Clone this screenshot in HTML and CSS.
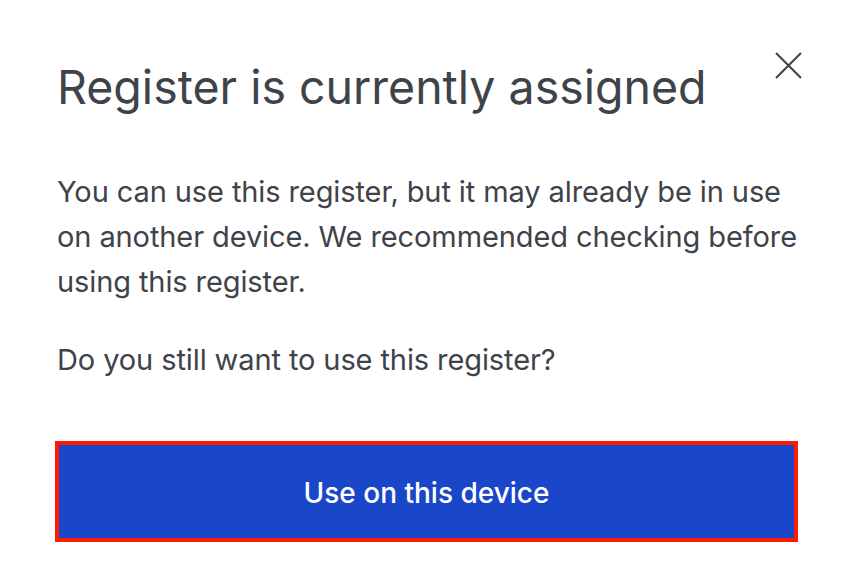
FILE: index.html
```html
<!DOCTYPE html>
<html lang="en">
<head>
<meta charset="utf-8">
<title>Register is currently assigned</title>
<link rel="stylesheet" href="styles.css">
</head>
<body>
<div class="dialog">
  <div class="header">
    <h1 class="title">Register is currently assigned</h1>
    <button class="close" aria-label="Close">
      <svg width="27" height="27" viewBox="0 0 27 27"><path d="M1 1L26 26M26 1L1 26" stroke="#3d4148" stroke-width="2" fill="none"/></svg>
    </button>
  </div>
  <p class="text first">You can use this register, but it may already be in use on another device. We recommended checking before using this register.</p>
  <p class="text">Do you still want to use this register?</p>
  <button class="primary">Use on this device</button>
</div>
</body>
</html>
```
FILE: styles.css
```css
html, body {
  margin: 0;
  background: #ffffff;
}
body {
  font-family: Inter, "Noto Sans", sans-serif;
  color: #3e434a;
}
.dialog {
  padding: 52px 46px 0 57px;
  display: flex;
  flex-direction: column;
}
.header {
  display: flex;
  justify-content: space-between;
  align-items: flex-start;
}
.title {
  margin: 7px 0 0 0;
  font-size: 46.5px;
  font-weight: 400;
  line-height: 56px;
  letter-spacing: 0;
}
.close {
  border: 0;
  background: none;
  padding: 0;
  width: 27px;
  height: 27px;
  display: flex;
}
.text {
  margin: 0;
  font-size: 29px;
  line-height: 45px;
  letter-spacing: -0.1px;
  max-width: 745px;
}
.text.first {
  margin-top: 54px;
  margin-bottom: 33px;
}
.primary {
  margin-top: 59px;
  margin-left: -2px;
  width: 743px;
  height: 101px;
  padding-top: 4px;
  background: #1a46c9;
  border: 4px solid #ff1a00;
  color: #ffffff;
  font-family: inherit;
  font-size: 28px;
  font-weight: 500;
}
```
